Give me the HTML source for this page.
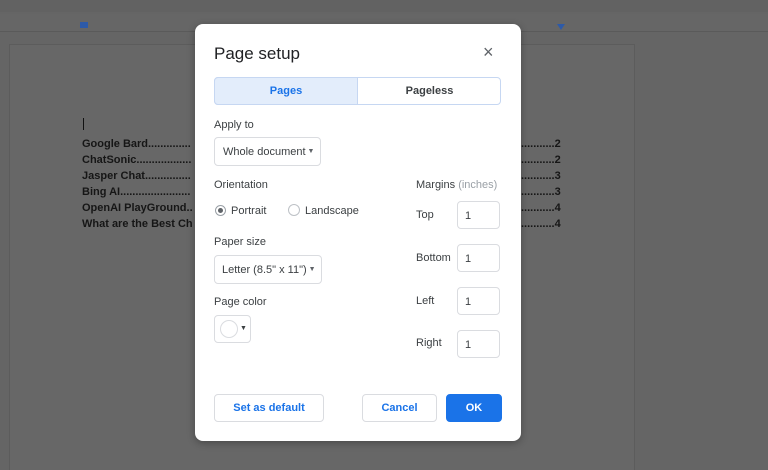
<!DOCTYPE html>
<html style="overflow:hidden;height:470px"><head><style>
*{box-sizing:border-box;margin:0;padding:0}
body{width:768px;height:470px;background:#656565;font-family:"Liberation Sans",Arial,sans-serif;position:relative;overflow:hidden}
.ruler{position:absolute;left:0;top:14px;width:768px;height:18px;border-bottom:1px solid #5a5a5a;background:#666}
.page{position:absolute;left:9px;top:44px;width:626px;height:426px;background:#676767;border:1px solid #5c5c5c;border-bottom:none}
.toc{position:absolute;left:82px;font-size:11px;font-weight:bold;color:#161616;line-height:16px}
.dlg{position:absolute;left:195px;top:24px;width:326px;height:417px;background:#fff;border-radius:8px;box-shadow:0 2px 8px rgba(0,0,0,.3)}
.t{position:absolute;color:#3c4043;font-size:12px}
.lbl{position:absolute;color:#3c4043;font-size:11px;white-space:nowrap}
.box{position:absolute;border:1px solid #dadce0;border-radius:4px;background:#fff}
.btn{position:absolute;border:1px solid #dadce0;border-radius:4px;color:#1a73e8;font-size:11px;font-weight:bold;text-align:center;line-height:26px}
.ar{font-size:7px;color:#5f6368;vertical-align:2px;margin-left:2px}
</style></head><body>
<div style="position:absolute;left:0;top:0;width:768px;height:12px;background:#626262"></div>
<div class="ruler"></div>
<div style="position:absolute;left:80px;top:22px;width:8px;height:6px;background:#2d5aa8"></div>
<div style="position:absolute;left:557px;top:24px;width:0;height:0;border-left:4px solid transparent;border-right:4px solid transparent;border-top:6px solid #2d5aa8"></div>
<div class="page"></div>
<div style="position:absolute;left:83px;top:118px;width:1px;height:12px;background:#111"></div>
<div class="toc" style="top:136px">Google Bard..............</div>
<div class="toc" style="top:152px">ChatSonic..................</div>
<div class="toc" style="top:168px">Jasper Chat...............</div>
<div class="toc" style="top:184px">Bing AI.......................</div>
<div class="toc" style="top:200px">OpenAI PlayGround..</div>
<div class="toc" style="top:216px">What are the Best Ch</div>
<div class="toc" style="left:521px;top:136px">...........2</div>
<div class="toc" style="left:521px;top:152px">...........2</div>
<div class="toc" style="left:521px;top:168px">...........3</div>
<div class="toc" style="left:521px;top:184px">...........3</div>
<div class="toc" style="left:521px;top:200px">...........4</div>
<div class="toc" style="left:521px;top:216px">...........4</div>
<div class="dlg">
 <div class="t" style="left:19px;top:20px;font-size:17px;color:#202124">Page setup</div>
 <div class="t" style="left:288px;top:18px;font-size:18px;color:#5f6368">×</div>
 <div class="box" style="left:19px;top:53px;width:287px;height:28px;border-color:#c6d7f2"></div>
 <div style="position:absolute;left:19px;top:53px;width:144px;height:28px;background:#e3edfb;border:1px solid #c6d7f2;border-radius:4px 0 0 4px;color:#1a73e8;font-size:11px;font-weight:bold;text-align:center;line-height:26px">Pages</div>
 <div style="position:absolute;left:163px;top:53px;width:143px;height:28px;color:#3c4043;font-size:11px;font-weight:bold;text-align:center;line-height:28px">Pageless</div>
 <div class="lbl" style="left:19px;top:95px">Apply to</div>
 <div class="box" style="left:19px;top:113px;width:107px;height:29px"><span class="lbl" style="left:8px;top:8px">Whole document<span class="ar">▼</span></span></div>
 <div class="lbl" style="left:19px;top:155px">Orientation</div>
 <div style="position:absolute;left:20px;top:181px;width:11px;height:11px;border:1px solid #9aa0a6;border-radius:50%"><div style="margin:2px;width:5px;height:5px;border-radius:50%;background:#5f6368"></div></div>
 <div class="lbl" style="left:36px;top:181px">Portrait</div>
 <div style="position:absolute;left:93px;top:180px;width:12px;height:12px;border:1px solid #bdc1c6;border-radius:50%"></div>
 <div class="lbl" style="left:110px;top:181px">Landscape</div>
 <div class="lbl" style="left:19px;top:212px">Paper size</div>
 <div class="box" style="left:19px;top:231px;width:108px;height:29px"><span class="lbl" style="left:7px;top:8px">Letter (8.5" x 11")<span class="ar">▼</span></span></div>
 <div class="lbl" style="left:19px;top:272px">Page color</div>
 <div class="box" style="left:19px;top:291px;width:37px;height:28px"><div style="position:absolute;left:5px;top:4px;width:18px;height:18px;border:1px solid #dadce0;border-radius:50%"></div><span style="position:absolute;left:25px;top:9px;font-size:7px;color:#3c4043">▼</span></div>
 <div class="lbl" style="left:221px;top:155px">Margins <span style="color:#9aa0a6">(inches)</span></div>
 <div class="lbl" style="left:221px;top:185px">Top</div>
 <div class="lbl" style="left:221px;top:228px">Bottom</div>
 <div class="lbl" style="left:221px;top:271px">Left</div>
 <div class="lbl" style="left:221px;top:313px">Right</div>
 <div class="box" style="left:262px;top:177px;width:43px;height:28px"><span class="lbl" style="left:7px;top:8px">1</span></div>
 <div class="box" style="left:262px;top:220px;width:43px;height:28px"><span class="lbl" style="left:7px;top:8px">1</span></div>
 <div class="box" style="left:262px;top:263px;width:43px;height:28px"><span class="lbl" style="left:7px;top:8px">1</span></div>
 <div class="box" style="left:262px;top:306px;width:43px;height:28px"><span class="lbl" style="left:7px;top:8px">1</span></div>
 <div class="btn" style="left:19px;top:370px;width:110px;height:28px">Set as default</div>
 <div class="btn" style="left:167px;top:370px;width:75px;height:28px">Cancel</div>
 <div class="btn" style="left:251px;top:370px;width:56px;height:28px;background:#1a73e8;color:#fff;border-color:#1a73e8">OK</div>
</div>
</body></html>
